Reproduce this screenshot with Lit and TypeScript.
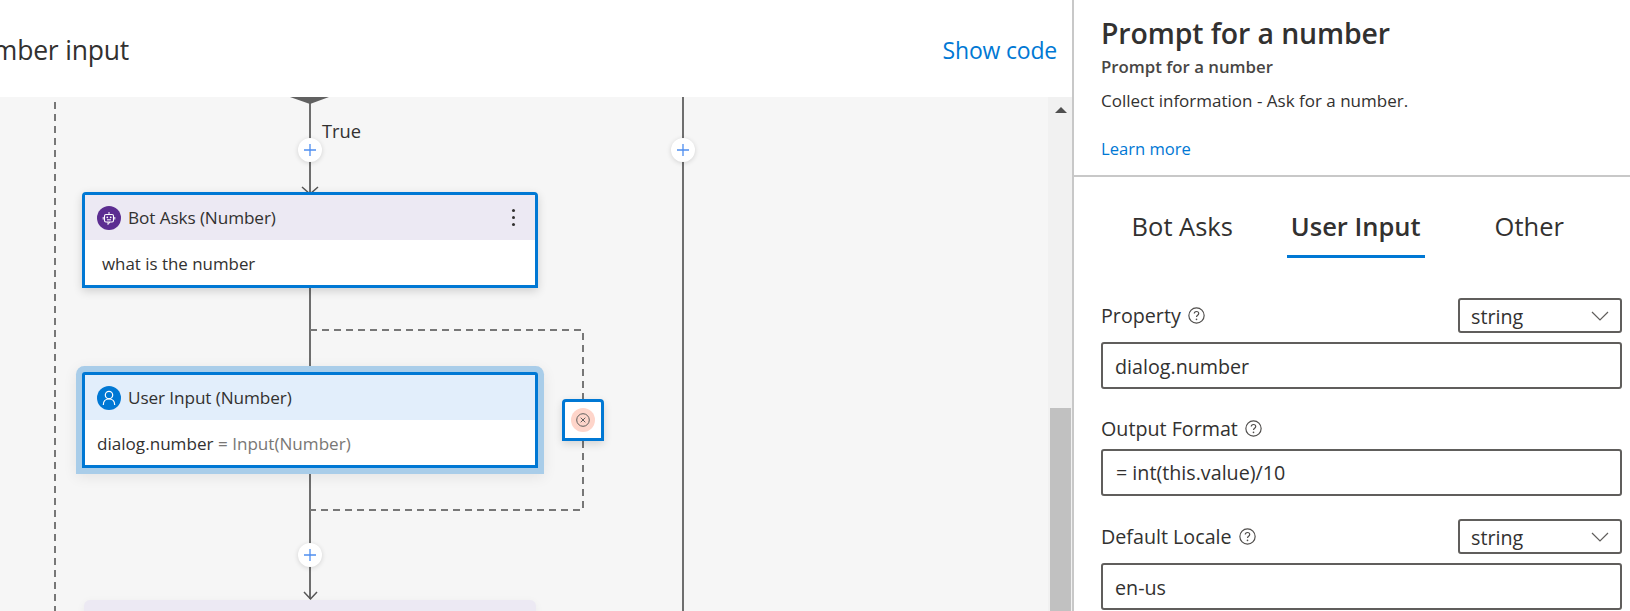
import { LitElement, html, css, svg } from "lit";
import { customElement } from "lit/decorators.js";

const help = html`<svg class="help" viewBox="0 0 16 16" width="17" height="17"><circle cx="8" cy="8" r="7.2" fill="none" stroke="#504e4c" stroke-width="1.100"/><path d="M5.900 6.200c0-1.200 1-2 2.100-2s2.100.8 2.100 1.900c0 1.700-2.100 1.600-2.100 3.400" fill="none" stroke="#504e4c" stroke-width="1.100"/><circle cx="8" cy="11.600" r=".8" fill="#504e4c"/></svg>`;
const chevron = html`<svg class="chev" viewBox="0 0 18 10" width="18" height="10"><path d="M1 1l8 8 8-8" fill="none" stroke="#605e5c" stroke-width="1.200"/></svg>`;
const plus = html`<svg viewBox="0 0 12 12" width="12" height="12"><path d="M6 0v12M0 6h12" stroke="#4f8ef0" stroke-width="1.300"/></svg>`;

@customElement("app-root")
export class AppRoot extends LitElement {
  static styles = css`
    :host { display: block; width: 1630px; height: 611px; overflow: hidden; background: #fff; color: #323130; font-family: "Open Sans", "Noto Sans", sans-serif; }
    .root { display: flex; height: 611px; }
    .left { width: 1072px; display: flex; flex-direction: column; overflow: hidden; }
    .top { height: 97px; flex: none; display: flex; align-items: center; justify-content: space-between; padding: 2px 15px 0 0; box-sizing: border-box; }
    .name { font-size: 26.500px; margin-left: -43px; letter-spacing: -0.2px; white-space: nowrap; }
    .show { font-size: 23px; color: #0078d4; letter-spacing: -0.2px; }
    .body { flex: 1; display: flex; min-height: 0; }
    .canvas { flex: 1; position: relative; background: #f6f6f6; overflow: hidden; }
    .lines { position: absolute; left: 0; top: 0; }
    .true { position: absolute; left: 322px; top: 21px; font-size: 18.300px; line-height: 26px; }
    .plus { position: absolute; width: 24px; height: 24px; margin: -12px 0 0 -12px; border-radius: 50%; background: #fff; box-shadow: 0 1px 5px rgba(0,0,0,.15); display: flex; align-items: center; justify-content: center; }
    .node { position: absolute; left: 82px; width: 456px; box-sizing: border-box; border: 3px solid #0078d4; border-radius: 4px 4px 0 0; background: #fff; box-shadow: 0 3px 10px rgba(0,0,0,.16); font-size: 17.100px; }
    .node.sel { box-shadow: 0 0 0 6px #a9cde9, 0 3px 14px 6px rgba(0,0,0,.08); border-radius: 3px 3px 0 0; }
    .head { height: 45px; display: flex; align-items: center; padding: 0 12px; gap: 7px; background: #ece9f3; }
    .sel .head { background: #e2eefb; }
    .head svg { flex: none; }
    .head .t { flex: 1; font-size: 17.200px; letter-spacing: -0.1px; }
    .kebab { width: 3.500px; height: 3.500px; border-radius: 50%; background: #323130; box-shadow: 0 -7px 0 #323130, 0 7px 0 #323130; margin-right: 8px; }
    .text { height: 45px; box-sizing: border-box; padding: 2px 0 0 17px; display: flex; align-items: center; white-space: pre; }
    .text.ask { font-size: 16.900px; }
    .sel .text { padding-left: 12px; }
    .gray { color: #797775; }
    .next { position: absolute; left: 84px; top: 503px; width: 452px; height: 60px; background: #ece9f3; border-radius: 6px; box-shadow: 0 2px 8px rgba(0,0,0,.05); }
    .stop { position: absolute; left: 562px; top: 302px; width: 42px; height: 42px; box-sizing: border-box; border: 3px solid #0078d4; border-radius: 4px 4px 0 0; background: #fff; box-shadow: 0 3px 8px rgba(0,0,0,.14); display: flex; align-items: center; justify-content: center; }
    .stopc { width: 24px; height: 24px; border-radius: 50%; background: #fed5ca; display: flex; align-items: center; justify-content: center; }
    .bar { width: 24px; flex: none; background: #f1f1f1; box-sizing: border-box; padding: 0 1px 0 2px; display: flex; flex-direction: column; align-items: stretch; }
    .up { height: 0; width: 0; margin: 10px auto 0; border-left: 6px solid transparent; border-right: 6px solid transparent; border-bottom: 6px solid #505050; }
    .thumb { margin-top: 295px; flex: 1; background: #c1c1c1; }
    .panel { flex: 1; border-left: 2px solid #c8c8c8; min-width: 0; display: flex; flex-direction: column; }
    .info { flex: none; box-sizing: border-box; border-bottom: 2px solid #c8c8c8; padding: 14px 0 0 27px; height: 177px; }
    .info h1 { margin: 0; font-size: 28.400px; line-height: 38px; font-weight: 600; letter-spacing: -0.1px; }
    .info h2 { margin: 4px 0 0; font-size: 16.800px; line-height: 22px; font-weight: 600; color: #484644; }
    .info p { margin: 12px 0 0; font-size: 17px; line-height: 22px; }
    .info a { display: block; margin-top: 26px; font-size: 16.600px; line-height: 22px; color: #0078d4; }
    .tabs { display: grid; grid-template-columns: repeat(3, 173.500px); margin: 33px 0 0 21.500px; }
    .tab { justify-self: center; font-size: 25.500px; line-height: 33px; padding: 0 4px 12px; border-bottom: 3px solid transparent; }
    .tab.on { font-weight: 600; border-bottom-color: #0078d4; }
    .fields { margin: 40px 8px 0 27px; display: flex; flex-direction: column; }
    .field { display: flex; flex-direction: column; gap: 9px; margin-bottom: 23px; }
    .field.f2 { margin-top: 5px; }
    .lrow { display: flex; align-items: center; justify-content: space-between; }
    .label { display: flex; align-items: center; gap: 7px; font-size: 19.700px; line-height: 25px; }
    .field.f2 .label { height: 23px; }
    .select, .input { box-sizing: border-box; border: 2px solid #605e5c; border-radius: 3px; display: flex; align-items: center; font-size: 19.700px; }
    .select { width: 164px; height: 35px; padding: 1px 11px 0 11px; justify-content: space-between; }
    .input { height: 47px; padding: 1px 0 0 12px; white-space: pre; }
    .input.eq { padding: 0 0 0 13px; }
    .help { flex: none; margin-top: -1px; }
  `;

  render() {
    return html`<div class="root">
      <div class="left">
        <div class="top"><div class="name">Number input</div><div class="show">Show code</div></div>
        <div class="body">
          <div class="canvas">
            <svg class="lines" width="1048" height="514" viewBox="0 97 1048 514">
              ${svg`<path d="M55 102V611" fill="none" stroke="#777" stroke-width="2" stroke-dasharray="7 5"/>
              <path d="M310 100V599" fill="none" stroke="#6e6e6e" stroke-width="2"/>
              <path d="M683 97V611" fill="none" stroke="#6e6e6e" stroke-width="2"/>
              <path d="M310 330H583V510H310" fill="none" stroke="#777" stroke-width="2" stroke-dasharray="7 5"/>
              <polygon points="290,97 329,97 310,104" fill="#616161"/>
              <path d="M302 187l8 7 8-7M304 592l6.500 7 6.500-7" fill="none" stroke="#555" stroke-width="1.500"/>`}
            </svg>
            <div class="true">True</div>
            <div class="plus" style="left:310px;top:53px">${plus}</div>
            <div class="plus" style="left:683px;top:53px">${plus}</div>
            <div class="plus" style="left:310px;top:458px">${plus}</div>
            <div class="node" style="top:95px">
              <div class="head">
                <svg width="24" height="24" viewBox="0 0 24 24"><circle cx="12" cy="12" r="12" fill="#5c2d91"/><rect x="7.500" y="8.500" width="9" height="7.500" rx="1.500" fill="none" stroke="#fff" stroke-width="1.100"/><path d="M12 6v2.500M6.200 11v2.500M17.800 11v2.500M10 13.800h4M11 16v2.500l2-2.500" fill="none" stroke="#fff" stroke-width="1"/><circle cx="10.300" cy="11.300" r=".9" fill="#fff"/><circle cx="13.700" cy="11.300" r=".9" fill="#fff"/></svg>
                <span class="t">Bot Asks (Number)</span><span class="kebab"></span>
              </div>
              <div class="text ask">what is the number</div>
            </div>
            <div class="node sel" style="top:275px">
              <div class="head">
                <svg width="24" height="24" viewBox="0 0 24 24"><circle cx="12" cy="12" r="12" fill="#0078d4"/><circle cx="12" cy="9" r="3.700" fill="none" stroke="#fff" stroke-width="1.200"/><path d="M6.300 19c0-4 2-6 5.700-6s5.700 2 5.700 6" fill="none" stroke="#fff" stroke-width="1.200"/></svg>
                <span class="t">User Input (Number)</span>
              </div>
              <div class="text">dialog.number <span class="gray">= Input(Number)</span></div>
            </div>
            <div class="stop"><div class="stopc">
              <svg width="14" height="14" viewBox="0 0 14 14"><circle cx="7" cy="7" r="6.300" fill="none" stroke="#605e5c" stroke-width="1"/><path d="M4.700 4.700l4.600 4.600M9.300 4.700l-4.600 4.600" stroke="#605e5c" stroke-width="1"/></svg>
            </div></div>
            <div class="next"></div>
          </div>
          <div class="bar"><div class="up"></div><div class="thumb"></div></div>
        </div>
      </div>
      <div class="panel">
        <div class="info">
          <h1>Prompt for a number</h1>
          <h2>Prompt for a number</h2>
          <p>Collect information - Ask for a number.</p>
          <a>Learn more</a>
        </div>
        <div class="tabs">
          <div class="tab">Bot Asks</div>
          <div class="tab on">User Input</div>
          <div class="tab">Other</div>
        </div>
        <div class="fields">
          <div class="field">
            <div class="lrow"><div class="label">Property ${help}</div><div class="select">string ${chevron}</div></div>
            <div class="input">dialog.number</div>
          </div>
          <div class="field f2">
            <div class="lrow"><div class="label">Output Format ${help}</div></div>
            <div class="input eq">= int(this.value)/10</div>
          </div>
          <div class="field">
            <div class="lrow"><div class="label">Default Locale ${help}</div><div class="select">string ${chevron}</div></div>
            <div class="input">en-us</div>
          </div>
        </div>
      </div>
    </div>`;
  }
}
